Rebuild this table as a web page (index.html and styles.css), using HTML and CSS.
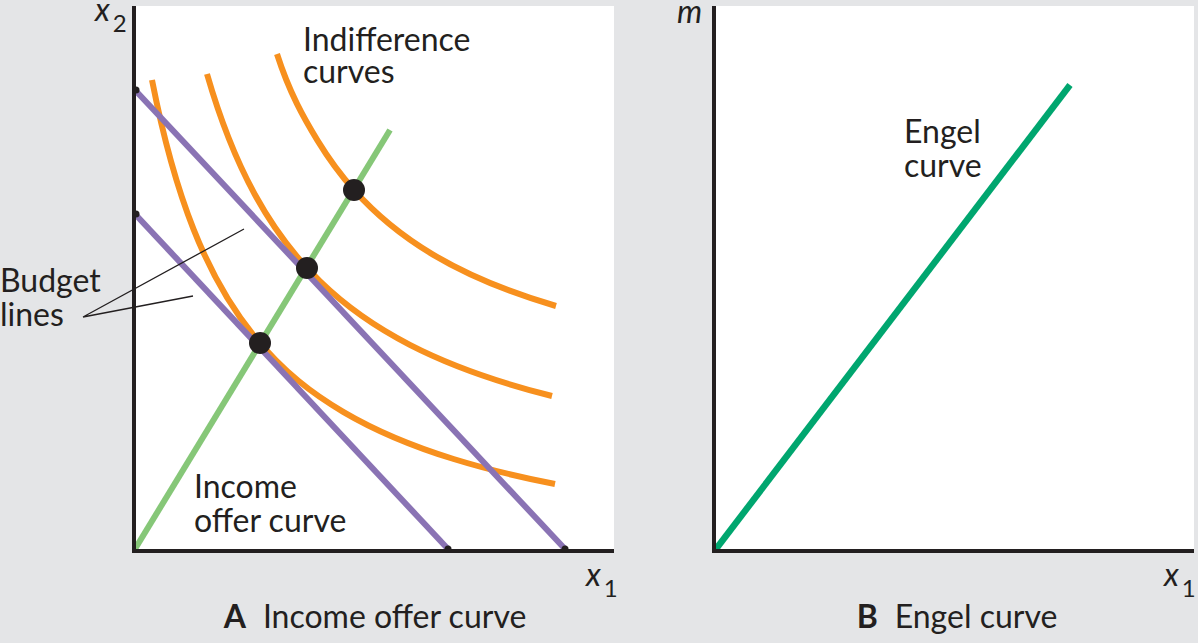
FILE: index.html
```html
<!DOCTYPE html>
<html lang="en">
<head>
<meta charset="utf-8">
<title>Income offer curve and Engel curve</title>
<link rel="stylesheet" href="styles.css">
</head>
<body>
<main class="figure">
  <section class="panel panel-a">
    <div class="plot">
      <svg class="chart" width="614" height="598" viewBox="0 0 614 598" aria-hidden="true">
        <rect class="paper" x="136" y="6" width="478" height="543"/>
        <path class="ic" d="M152 80 C165.87 150.83 179.73 194.37 193.6 229.36 C213.6 279.83 233.6 310.62 253.6 335.35 C283.6 372.45 313.6 394.45 343.6 412.09 C380.27 433.65 416.93 447.67 453.6 459 C487.4 469.45 521.2 477.35 555 484"/>
        <path class="ic" d="M207 74 C222.95 129.28 238.9 165.32 254.85 194.5 C276.52 234.14 298.18 260.14 319.85 281.22 C349.85 310.4 379.85 329.46 409.85 344.9 C457.23 369.28 504.62 384.11 552 396.02"/>
        <path class="ic" d="M277 54 C289.5 93 304.06 118.44 317.59 140.61 C329.73 160.5 341.86 176.37 354 190 C380.2 219.42 406.39 238.7 432.59 254.33 C473.73 278.88 514.86 293.92 556 306"/>
        <line class="budget" x1="135" y1="90" x2="565" y2="549"/>
        <line class="budget" x1="135" y1="214" x2="448" y2="549"/>
        <line class="offer" x1="135" y1="549" x2="390" y2="130"/>
        <path class="leader" d="M83 317 L244 229 M83 317 L193 296"/>
        <circle class="dot" cx="260" cy="343" r="11"/>
        <circle class="dot" cx="307" cy="268" r="11"/>
        <circle class="dot" cx="354" cy="190" r="11"/>
        <path class="axis" d="M134 6 V551 H614"/>
        <circle class="dot" cx="136" cy="90" r="3.5"/>
        <circle class="dot" cx="136" cy="214" r="3.5"/>
        <circle class="dot" cx="448" cy="549" r="3.5"/>
        <circle class="dot" cx="565" cy="549" r="3.5"/>
      </svg>
      <span class="var var-x2">x<span class="sub">2</span></span>
      <span class="var var-x1a">x<span class="sub">1</span></span>
      <span class="lbl lbl-indiff">Indifference<br>curves</span>
      <span class="lbl lbl-budget">Budget<br>lines</span>
      <span class="lbl lbl-offer">Income<br>offer curve</span>
    </div>
    <p class="caption"><b class="tag">A</b>Income offer curve</p>
  </section>
  <section class="panel panel-b">
    <div class="plot">
      <svg class="chart" width="584" height="598" viewBox="0 0 584 598" aria-hidden="true">
        <rect class="paper" x="102" y="6" width="478" height="543"/>
        <line class="engel" x1="102" y1="549" x2="456" y2="85"/>
        <path class="axis" d="M100 6 V551 H580"/>
      </svg>
      <span class="var var-m">m</span>
      <span class="var var-x1b">x<span class="sub">1</span></span>
      <span class="lbl lbl-engel">Engel<br>curve</span>
    </div>
    <p class="caption"><b class="tag">B</b>Engel curve</p>
  </section>
</main>
</body>
</html>
```

FILE: styles.css
```css
html, body {
  margin: 0;
  padding: 0;
}

body {
  background: #e4e5e7;
  color: #231f20;
  font-family: Lato, "Open Sans", "Liberation Sans", sans-serif;
  overflow: hidden;
}

.figure {
  display: flex;
  width: 1198px;
  height: 643px;
}

.panel-a {
  width: 614px;
}

.panel-b {
  width: 584px;
}

.plot {
  position: relative;
  height: 598px;
}

.chart {
  display: block;
}

.paper {
  fill: #ffffff;
}

.ic {
  fill: none;
  stroke: #f7901e;
  stroke-width: 6;
  stroke-linejoin: round;
}

.budget {
  stroke: #8a73b4;
  stroke-width: 6;
}

.offer {
  stroke: #86c778;
  stroke-width: 6;
}

.engel {
  stroke: #00a66f;
  stroke-width: 6.5;
}

.leader {
  fill: none;
  stroke: #231f20;
  stroke-width: 1.3;
}

.dot {
  fill: #231f20;
}

.axis {
  fill: none;
  stroke: #231f20;
  stroke-width: 4;
}

/* chart labels placed on the diagram canvas */
.lbl {
  position: absolute;
  font-size: 32px;
  line-height: 34px;
  white-space: nowrap;
}

.lbl-indiff {
  left: 303px;
  top: 23px;
  line-height: 32px;
}

.lbl-budget {
  left: 0;
  top: 263px;
}

.lbl-offer {
  left: 194px;
  top: 469px;
}

.lbl-engel {
  left: 290px;
  top: 114px;
}

.var {
  position: absolute;
  font-size: 32px;
  font-style: italic;
  line-height: 32px;
  white-space: nowrap;
}

.var .sub {
  font-style: normal;
  font-size: 24px;
  margin-left: 3px;
  vertical-align: -11px;
}

.var-x2 {
  left: 95px;
  top: 1px;
  line-height: 16px;
}

.var-x1a {
  left: 586px;
  top: 558px;
}

.var-x1b {
  left: 550px;
  top: 558px;
}

.var-m {
  left: 63px;
  top: 3px;
  line-height: 16px;
}

.caption {
  margin: 0;
  font-size: 32px;
  line-height: 36px;
  text-align: center;
  white-space: nowrap;
}

.panel-a .caption {
  padding-left: 136px;
}

.panel-b .caption {
  padding-left: 102px;
}

.caption .tag {
  font-weight: 700;
  margin-right: 17px;
}
```
